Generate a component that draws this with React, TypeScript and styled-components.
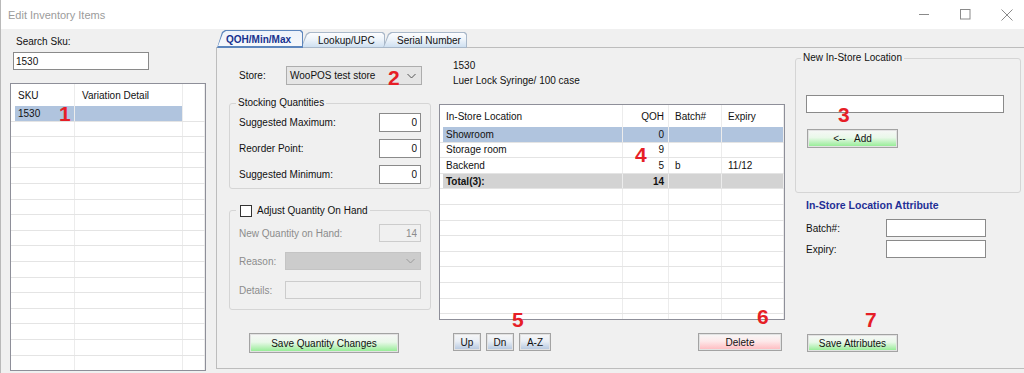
import React from "react";
import styled, { createGlobalStyle, css } from "styled-components";

const GlobalStyle = createGlobalStyle`
  html, body { margin: 0; padding: 0; background: #f0f0f0; }
  body { font-family: "Liberation Sans", Arial, sans-serif; font-size: 10px; color: #111; }
  * { box-sizing: border-box; }
  input { font-family: "Liberation Sans", Arial, sans-serif; font-size: 10px; }
`;

const Window = styled.div`
  position: relative;
  width: 1024px;
  height: 373px;
  overflow: hidden;
  background: #f0f0f0;
  border-left: 1px solid #b9b9b9;
  display: flex;
  flex-direction: column;
`;

const TitleBar = styled.div`
  height: 29px;
  flex-shrink: 0;
  background: #fff;
  display: flex;
  align-items: center;
`;

const Title = styled.span`
  margin-left: 7px;
  font-size: 11px;
  color: #9b9b9b;
`;

const Controls = styled.div`
  margin-left: auto;
  margin-right: -3px;
  height: 100%;
  display: flex;
`;

const ControlButton = styled.div`
  width: 41px;
  height: 100%;
  display: flex;
  align-items: center;
  justify-content: center;
`;

const Body = styled.div`
  flex: 1;
  min-height: 0;
  display: flex;
`;

/* ---------- left panel ---------- */
const LeftPanel = styled.div`
  width: 215px;
  flex-shrink: 0;
  padding: 7px 0 0 9px;
  display: flex;
  flex-direction: column;
`;

const SearchLabel = styled.div`
  margin-left: 6px;
  height: 12px;
  line-height: 12px;
`;

const TextBox = styled.input<{ $w: number; $h?: number; $right?: boolean; $disabled?: boolean }>`
  width: ${(p) => p.$w}px;
  height: ${(p) => p.$h ?? 18}px;
  margin: 0;
  border: 1px solid ${(p) => (p.$disabled ? "#cccccc" : "#8a8a8a")};
  background: ${(p) => (p.$disabled ? "#f0f0f0" : "#fff")};
  color: ${(p) => (p.$disabled ? "#8c8c8c" : "#111")};
  padding: 0 ${(p) => (p.$right ? 3 : 2)}px;
  text-align: ${(p) => (p.$right ? "right" : "left")};
  outline: none;
  flex-shrink: 0;
`;

const SearchInput = styled(TextBox)`
  margin: 4px 0 0 3px;
`;

const LocationInput = styled(TextBox)`
  margin-top: 31px;
`;

const ListBox = styled.div`
  margin-top: 13px;
  width: 196px;
  height: 288px;
  border: 1px solid #8e8f99;
  background: #fff;
  overflow: hidden;
`;

const ListGridRow = styled.div<{ $header?: boolean }>`
  display: grid;
  grid-template-columns: 64px 108px 1fr;
  height: ${(p) => (p.$header ? "22px" : "15.6px")};
  ${(p) =>
    !p.$header &&
    css`
      border-bottom: 1px solid #e4e4e4;
    `}
`;

const ListCell = styled.div<{ $sel?: boolean; $first?: boolean }>`
  border-right: 1px solid #ececec;
  padding-left: 7px;
  display: flex;
  align-items: center;
  white-space: nowrap;
  overflow: hidden;
  ${(p) =>
    p.$sel &&
    css`
      background: ${p.$first
        ? "linear-gradient(to right, #fff 4px, #b0c4de 4px)"
        : "#b0c4de"};
    `}
`;

/* ---------- tab control ---------- */
const TabControl = styled.div`
  flex: 1;
  margin-right: -6px;
  padding-top: 1px;
  display: flex;
  flex-direction: column;
`;

const TabStrip = styled.div`
  height: 18px;
  display: flex;
  align-items: flex-end;
  padding-left: 1px;
  position: relative;
  z-index: 2;
  margin-bottom: -1px;
`;

const tabShape = "polygon(0 100%, 5px 2px, 8px 0, calc(100% - 2px) 0, 100% 2px, 100% 100%)";

const Tab = styled.div<{ $active?: boolean; $w: number; $textLeft: number }>`
  position: relative;
  width: ${(p) => p.$w}px;
  height: ${(p) => (p.$active ? 18 : 16)}px;
  margin-left: ${(p) => (p.$active ? 0 : -2)}px;
  z-index: ${(p) => (p.$active ? 2 : 1)};
  clip-path: ${tabShape};
  background: ${(p) => (p.$active ? "#5d86bd" : "#a9b8c9")};
  padding-left: ${(p) => p.$textLeft}px;
  display: flex;
  align-items: center;
  white-space: nowrap;
  color: ${(p) => (p.$active ? "#17328f" : "#111")};
  font-weight: ${(p) => (p.$active ? "bold" : "normal")};
  &::before {
    content: "";
    position: absolute;
    top: 1px;
    left: 1px;
    right: 1px;
    bottom: ${(p) => (p.$active ? "2px" : "1px")};
    clip-path: ${tabShape};
    background: ${(p) =>
      p.$active
        ? "linear-gradient(#eef3fa, #f6f8fb)"
        : "linear-gradient(#fdfdfe 0%, #eef4fa 45%, #cfe0f1 100%)"};
  }
  & > span {
    position: relative;
  }
`;

const TabPage = styled.div`
  height: 322px;
  border: 1px solid #bdbdbd;
  background: #f0f0f0;
  display: flex;
  padding-left: 12px;
`;

/* ---------- common ---------- */
const GroupBox = styled.fieldset<{ $w: number; $pad: number; $padBottom: number; $mt: number }>`
  margin: ${(p) => p.$mt}px 0 0 0;
  width: ${(p) => p.$w}px;
  padding: 0 ${(p) => p.$pad}px ${(p) => p.$padBottom}px;
  border: 1px solid #d5d5d5;
  border-radius: 3px;
  min-width: 0;
  display: flex;
  flex-direction: column;
`;

const Legend = styled.legend<{ $shift: number }>`
  padding: 0 2px;
  margin-left: ${(p) => p.$shift}px;
  line-height: 12px;
  height: 12px;
  display: flex;
  align-items: center;
`;

const CheckLegend = styled(Legend)`
  height: 13px;
  line-height: 13px;
`;

const CheckBox = styled.span`
  width: 12px;
  height: 12px;
  margin-left: 2px;
  border: 1px solid #333;
  background: #fff;
  display: inline-block;
`;

const CheckLabel = styled.span`
  margin-left: 5px;
`;

const FieldRow = styled.div<{ $mt: number; $h?: number }>`
  display: flex;
  align-items: center;
  justify-content: space-between;
  height: ${(p) => p.$h ?? 19}px;
  margin-top: ${(p) => p.$mt}px;
`;

const FieldLabel = styled.span<{ $disabled?: boolean }>`
  color: ${(p) => (p.$disabled ? "#8c8c8c" : "#111")};
  white-space: nowrap;
`;

const Combo = styled.div<{ $w: number; $h: number; $disabled?: boolean }>`
  width: ${(p) => p.$w}px;
  height: ${(p) => p.$h}px;
  border: 1px solid ${(p) => (p.$disabled ? "#c4c4c4" : "#adadad")};
  background: ${(p) => (p.$disabled ? "#cccccc" : "#e5e5e5")};
  display: flex;
  align-items: center;
  padding: 0 5px 0 3px;
  flex-shrink: 0;
`;

const ComboText = styled.span`
  flex: 1;
  white-space: nowrap;
`;

type Tone = "green" | "pink" | "blue";
const toneEnd: Record<Tone, string> = {
  green: "#8fec8f",
  pink: "#ffb9be",
  blue: "#b3c6df",
};
const toneMid: Record<Tone, string> = {
  green: "#e9f8e9",
  pink: "#fde9ea",
  blue: "#e9eef5",
};

const Button = styled.div<{ $tone: Tone; $w: number; $h: number; $mt?: number; $ml?: number }>`
  width: ${(p) => p.$w}px;
  height: ${(p) => p.$h}px;
  margin-top: ${(p) => p.$mt ?? 0}px;
  margin-left: ${(p) => p.$ml ?? 0}px;
  border: 1px solid #a3a3a3;
  box-shadow: inset 0 0 0 1px #e2e2e2;
  background: linear-gradient(#f7f7f7 0%, ${(p) => toneMid[p.$tone]} 45%, ${(p) => toneEnd[p.$tone]} 100%);
  display: flex;
  align-items: center;
  justify-content: center;
  white-space: nowrap;
  flex-shrink: 0;
`;

/* ---------- left column ---------- */
const LeftCol = styled.div`
  width: 202px;
  display: flex;
  flex-direction: column;
`;

const StoreRow = styled.div`
  margin-top: 18px;
  height: 19px;
  display: flex;
  align-items: center;
  padding-left: 10px;
`;

const StoreLabel = styled.span`
  width: 47px;
`;

/* ---------- center column ---------- */
const CenterCol = styled.div`
  width: 346px;
  margin-left: 8px;
  display: flex;
  flex-direction: column;
`;

const InfoBlock = styled.div`
  height: 56px;
  padding: 10px 0 0 14px;
  line-height: 15px;
`;

const DataGrid = styled.div`
  width: 346px;
  height: 216px;
  border: 1px solid #8e8f99;
  background: #fff;
  overflow: hidden;
`;

const GridRow = styled.div<{ $header?: boolean; $bold?: boolean }>`
  display: grid;
  grid-template-columns: 183px 46px 53px 62px;
  height: ${(p) => (p.$header ? "22px" : "15.6px")};
  font-weight: ${(p) => (p.$bold ? "bold" : "normal")};
  ${(p) =>
    !p.$header &&
    css`
      border-bottom: 1px solid #e4e4e4;
    `}
`;

const GridCell = styled.div<{ $bg?: string; $first?: boolean; $right?: boolean }>`
  border-right: 1px solid #ececec;
  padding: ${(p) => (p.$right ? "0 4px 0 0" : "0 0 0 6px")};
  display: flex;
  align-items: center;
  justify-content: ${(p) => (p.$right ? "flex-end" : "flex-start")};
  white-space: nowrap;
  overflow: hidden;
  ${(p) =>
    p.$bg &&
    css`
      background: ${p.$first ? `linear-gradient(to right, #fff 3px, ${p.$bg} 3px)` : p.$bg};
    `}
`;

const ButtonsRow = styled.div`
  margin-top: 13px;
  padding: 0 3px 0 14px;
  display: flex;
  align-items: center;
  gap: 5px;
`;

const Spacer = styled.div`
  flex: 1;
`;

/* ---------- right column ---------- */
const RightCol = styled.div`
  width: 226px;
  margin-left: 10px;
  display: flex;
  flex-direction: column;
`;

const AttrTitle = styled.div`
  margin-top: 6px;
  padding-left: 11px;
  height: 12px;
  line-height: 12px;
  font-weight: bold;
  font-size: 10.5px;
  color: #1f2f96;
`;

const AttrRow = styled.div<{ $mt: number }>`
  margin-top: ${(p) => p.$mt}px;
  padding-left: 11px;
  height: 18px;
  display: flex;
  align-items: center;
`;

const AttrLabel = styled.span`
  width: 80px;
`;

/* ---------- badges ---------- */
const Badge = styled.span<{ $x: number; $y: number }>`
  position: absolute;
  left: ${(p) => p.$x}px;
  top: ${(p) => p.$y}px;
  font-family: "Liberation Sans", Arial, sans-serif;
  font-weight: bold;
  font-size: 21px;
  line-height: 21px;
  color: #e61e26;
  pointer-events: none;
  z-index: 10;
`;

const Chevron = ({ color }: { color: string }) => (
  <svg width="9" height="6" viewBox="0 0 9 6">
    <path d="M0.5 1 L4.5 5 L8.5 1" fill="none" stroke={color} strokeWidth="1" />
  </svg>
);

const locations = [
  { name: "Showroom", qoh: "0", batch: "", expiry: "", sel: true },
  { name: "Storage room", qoh: "9", batch: "", expiry: "" },
  { name: "Backend", qoh: "5", batch: "b", expiry: "11/12" },
];

export default function App() {
  return (
    <>
      <GlobalStyle />
      <Window>
        <TitleBar>
          <Title>Edit Inventory Items</Title>
          <Controls>
            <ControlButton>
              <svg width="11" height="11" viewBox="0 0 11 11">
                <path d="M0 5.5 H10" stroke="#8a8a8a" strokeWidth="1" />
              </svg>
            </ControlButton>
            <ControlButton>
              <svg width="11" height="11" viewBox="0 0 11 11">
                <rect x="0.5" y="0.5" width="9.5" height="9.5" fill="none" stroke="#8a8a8a" strokeWidth="1" />
              </svg>
            </ControlButton>
            <ControlButton>
              <svg width="12" height="12" viewBox="0 0 12 12">
                <path d="M0.5 0.5 L11.5 11.5 M11.5 0.5 L0.5 11.5" stroke="#8a8a8a" strokeWidth="1" />
              </svg>
            </ControlButton>
          </Controls>
        </TitleBar>
        <Body>
          <LeftPanel>
            <SearchLabel>Search Sku:</SearchLabel>
            <SearchInput $w={136} readOnly value="1530" />
            <ListBox>
              <ListGridRow $header>
                <ListCell>SKU</ListCell>
                <ListCell>Variation Detail</ListCell>
                <ListCell />
              </ListGridRow>
              <ListGridRow>
                <ListCell $sel $first>1530</ListCell>
                <ListCell $sel />
                <ListCell />
              </ListGridRow>
              {Array.from({ length: 16 }).map((_, i) => (
                <ListGridRow key={i}>
                  <ListCell />
                  <ListCell />
                  <ListCell />
                </ListGridRow>
              ))}
            </ListBox>
          </LeftPanel>

          <TabControl>
            <TabStrip>
              <Tab $active $w={86} $textLeft={9}>
                <span>QOH/Min/Max</span>
              </Tab>
              <Tab $w={84} $textLeft={17}>
                <span>Lookup/UPC</span>
              </Tab>
              <Tab $w={84} $textLeft={14}>
                <span>Serial Number</span>
              </Tab>
            </TabStrip>
            <TabPage>
              <LeftCol>
                <StoreRow>
                  <StoreLabel>Store:</StoreLabel>
                  <Combo $w={136} $h={19}>
                    <ComboText>WooPOS test store</ComboText>
                    <Chevron color="#555" />
                  </Combo>
                </StoreRow>
                <GroupBox $w={202} $pad={9} $padBottom={4} $mt={12}>
                  <Legend $shift={-3}>Stocking Quantities</Legend>
                  <FieldRow $mt={4}>
                    <FieldLabel>Suggested Maximum:</FieldLabel>
                    <TextBox $w={42} $h={19} $right readOnly value="0" />
                  </FieldRow>
                  <FieldRow $mt={7}>
                    <FieldLabel>Reorder Point:</FieldLabel>
                    <TextBox $w={42} $h={19} $right readOnly value="0" />
                  </FieldRow>
                  <FieldRow $mt={7}>
                    <FieldLabel>Suggested Minimum:</FieldLabel>
                    <TextBox $w={42} $h={19} $right readOnly value="0" />
                  </FieldRow>
                </GroupBox>
                <GroupBox $w={202} $pad={9} $padBottom={10} $mt={15}>
                  <CheckLegend $shift={-3}>
                    <CheckBox />
                    <CheckLabel>Adjust Quantity On Hand</CheckLabel>
                  </CheckLegend>
                  <FieldRow $mt={7} $h={18}>
                    <FieldLabel $disabled>New Quantity on Hand:</FieldLabel>
                    <TextBox $w={42} $h={18} $right $disabled readOnly value="14" />
                  </FieldRow>
                  <FieldRow $mt={10} $h={18}>
                    <FieldLabel $disabled>Reason:</FieldLabel>
                    <Combo $w={136} $h={18} $disabled>
                      <ComboText />
                      <Chevron color="#9a9a9a" />
                    </Combo>
                  </FieldRow>
                  <FieldRow $mt={11} $h={18}>
                    <FieldLabel $disabled>Details:</FieldLabel>
                    <TextBox $w={136} $h={18} $disabled readOnly value="" />
                  </FieldRow>
                </GroupBox>
                <Button $tone="green" $w={150} $h={20} $mt={23} $ml={20}>
                  Save Quantity Changes
                </Button>
              </LeftCol>

              <CenterCol>
                <InfoBlock>
                  <div>1530</div>
                  <div>Luer Lock Syringe/ 100 case</div>
                </InfoBlock>
                <DataGrid>
                  <GridRow $header>
                    <GridCell>In-Store Location</GridCell>
                    <GridCell $right>QOH</GridCell>
                    <GridCell>Batch#</GridCell>
                    <GridCell>Expiry</GridCell>
                  </GridRow>
                  {locations.map((l) => {
                    const bg = l.sel ? "#b0c4de" : undefined;
                    return (
                      <GridRow key={l.name}>
                        <GridCell $bg={bg} $first>{l.name}</GridCell>
                        <GridCell $bg={bg} $right>{l.qoh}</GridCell>
                        <GridCell $bg={bg}>{l.batch}</GridCell>
                        <GridCell $bg={bg}>{l.expiry}</GridCell>
                      </GridRow>
                    );
                  })}
                  <GridRow $bold>
                    <GridCell $bg="#d3d3d3" $first>Total(3):</GridCell>
                    <GridCell $bg="#d3d3d3" $right>14</GridCell>
                    <GridCell $bg="#d3d3d3" />
                    <GridCell $bg="#d3d3d3" />
                  </GridRow>
                  {Array.from({ length: 10 }).map((_, i) => (
                    <GridRow key={i}>
                      <GridCell />
                      <GridCell />
                      <GridCell />
                      <GridCell />
                    </GridRow>
                  ))}
                </DataGrid>
                <ButtonsRow>
                  <Button $tone="blue" $w={28} $h={18}>Up</Button>
                  <Button $tone="blue" $w={28} $h={18}>Dn</Button>
                  <Button $tone="blue" $w={32} $h={18}>A-Z</Button>
                  <Spacer />
                  <Button $tone="pink" $w={84} $h={18}>Delete</Button>
                </ButtonsRow>
              </CenterCol>

              <RightCol>
                <GroupBox $w={226} $pad={10} $padBottom={44} $mt={4}>
                  <Legend $shift={-5}>New In-Store Location</Legend>
                  <LocationInput $w={198} $h={18} readOnly value="" />
                  <Button $tone="green" $w={91} $h={19} $mt={16} $ml={1}>
                    &lt;--&nbsp;&nbsp;&nbsp;Add
                  </Button>
                </GroupBox>
                <AttrTitle>In-Store Location Attribute</AttrTitle>
                <AttrRow $mt={8}>
                  <AttrLabel>Batch#:</AttrLabel>
                  <TextBox $w={100} $h={18} readOnly value="" />
                </AttrRow>
                <AttrRow $mt={3}>
                  <AttrLabel>Expiry:</AttrLabel>
                  <TextBox $w={100} $h={18} readOnly value="" />
                </AttrRow>
                <Button $tone="green" $w={91} $h={18} $mt={76} $ml={12}>
                  Save Attributes
                </Button>
              </RightCol>
            </TabPage>
          </TabControl>
        </Body>

        <Badge $x={58} $y={103}>1</Badge>
        <Badge $x={387} $y={67}>2</Badge>
        <Badge $x={837} $y={104}>3</Badge>
        <Badge $x={634} $y={144}>4</Badge>
        <Badge $x={511} $y={309}>5</Badge>
        <Badge $x={756} $y={306}>6</Badge>
        <Badge $x={864} $y={309}>7</Badge>
      </Window>
    </>
  );
}
